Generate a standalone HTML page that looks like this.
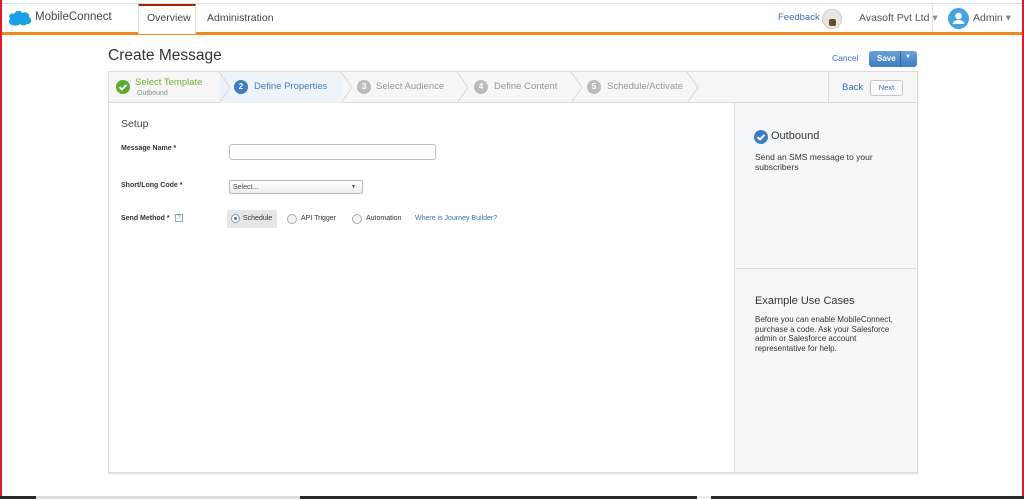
<!DOCTYPE html>
<html><head><style>
*{box-sizing:border-box;margin:0;padding:0}
body{width:1024px;height:499px;overflow:hidden;background:#fff;font-family:"Liberation Sans",Arial,sans-serif;position:relative;color:#333}
.a{position:absolute}
</style></head><body>
<div class="a" style="left:0;top:0;width:2px;height:499px;background:#e0192a"></div>
<div class="a" style="left:1022px;top:0;width:2px;height:499px;background:#e0192a"></div>
<div class="a" style="left:2px;top:3px;width:1020px;height:1px;background:#ddd"></div>
<!-- header -->
<div class="a" style="left:2px;top:32px;width:1020px;height:3px;background:#f08a1c"></div>
<svg class="a" style="left:8px;top:10px" width="24" height="16" viewBox="0 0 24 16"><path d="M5 15C1 15 0 11 2 9C0 6 3 2 6 4C8 0 13 0 14 3C17 1 22 3 21 7C25 9 23 15 19 14C17 16 14 16 12 14C10 16 6 16 5 15Z" fill="#1ba1e2"/></svg>
<div class="a" style="left:35px;top:11px;font-size:11.5px;color:#444">MobileConnect</div>
<div class="a" style="left:138px;top:4px;width:58px;height:30px;background:#fff;border-left:1px solid #ddd;border-right:1px solid #ddd;border-top:2px solid #9a2a0a"></div>
<div class="a" style="left:147px;top:12px;font-size:10.5px;color:#444">Overview</div>
<div class="a" style="left:207px;top:12px;font-size:10.5px;color:#444">Administration</div>
<div class="a" style="left:778px;top:12px;font-size:9.5px;color:#3a6eb5">Feedback</div>
<div class="a" style="left:822px;top:9px;width:20px;height:20px;border-radius:50%;background:#e8e6e2;border:1px solid #ccc"></div>
<div class="a" style="left:829px;top:19px;width:7px;height:7px;border-radius:2px;background:#6b4a2a"></div>
<div class="a" style="left:859px;top:12px;font-size:10.5px;color:#555">Avasoft Pvt Ltd <span style="color:#888">▾</span></div>
<div class="a" style="left:932px;top:4px;width:1px;height:28px;background:#e3e3e3"></div>
<div class="a" style="left:948px;top:8px;width:21px;height:21px;border-radius:50%;background:#45a3e0"></div>
<svg class="a" style="left:948px;top:8px" width="21" height="21" viewBox="0 0 21 21"><circle cx="10.5" cy="8" r="3.3" fill="#fff"/><path d="M4.5 16c1-3 3-4 6-4s5 1 6 4z" fill="#fff"/></svg>
<div class="a" style="left:973px;top:12px;font-size:10.5px;color:#555">Admin <span style="color:#888">▾</span></div>
<!-- title -->
<div class="a" style="left:108px;top:47px;font-size:15.5px;color:#333">Create Message</div>
<div class="a" style="left:832px;top:53px;font-size:8.5px;color:#3a6eb5">Cancel</div>
<div class="a" style="left:869px;top:51px;width:48px;height:16px;border-radius:3px;background:linear-gradient(#6aa0d8,#3f7cc0)"></div>
<div class="a" style="left:900px;top:51px;width:1px;height:16px;background:#2f65a3"></div>
<div class="a" style="left:877px;top:54px;font-size:8px;color:#fff;font-weight:bold">Save</div>
<div class="a" style="left:905px;top:54px;font-size:6px;color:#fff">▼</div>
<!-- panel -->
<div class="a" style="left:108px;top:71px;width:810px;height:402px;border:1px solid #dcdcdc;box-shadow:0 1px 1px #ddd"></div>
<div class="a" style="left:109px;top:72px;width:808px;height:31px;background:#f6f6f6;border-bottom:1px solid #ddd"></div>
<div class="a" style="left:220px;top:72px;width:122px;height:31px;background:#eef3fa"></div>
<svg class="a" style="left:109px;top:72px" width="720" height="31" viewBox="0 0 720 31" fill="none" stroke="#d8d8d8"><path d="M110 0L121 15.5L110 31M232 0L243 15.5L232 31M348 0L359 15.5L348 31M462 0L473 15.5L462 31M578 0L589 15.5L578 31"/></svg>
<svg class="a" style="left:116px;top:80px" width="14" height="14"><circle cx="7" cy="7" r="7" fill="#5aab33"/><path d="M3.5 7.2L6 9.5L10.5 4.8" stroke="#fff" stroke-width="1.8" fill="none"/></svg>
<div class="a" style="left:135px;top:77px;font-size:9.5px;color:#6bb33a">Select Template</div>
<div class="a" style="left:137px;top:90px;font-size:7px;color:#888">Outbound</div>
<div class="a" style="left:234px;top:80px;width:14px;height:14px;border-radius:50%;background:#3f7cc0;color:#fff;font-size:8px;font-weight:bold;text-align:center;line-height:14px">2</div>
<div class="a" style="left:254px;top:81px;font-size:9.5px;color:#4a7cb8">Define Properties</div>
<div class="a" style="left:357px;top:80px;width:14px;height:14px;border-radius:50%;background:#bbb;color:#fff;font-size:8px;font-weight:bold;text-align:center;line-height:14px">3</div>
<div class="a" style="left:376px;top:81px;font-size:9.5px;color:#999">Select Audience</div>
<div class="a" style="left:474px;top:80px;width:14px;height:14px;border-radius:50%;background:#bbb;color:#fff;font-size:8px;font-weight:bold;text-align:center;line-height:14px">4</div>
<div class="a" style="left:494px;top:81px;font-size:9.5px;color:#999">Define Content</div>
<div class="a" style="left:587px;top:80px;width:14px;height:14px;border-radius:50%;background:#bbb;color:#fff;font-size:8px;font-weight:bold;text-align:center;line-height:14px">5</div>
<div class="a" style="left:607px;top:81px;font-size:9.5px;color:#999">Schedule/Activate</div>
<div class="a" style="left:828px;top:72px;width:1px;height:31px;background:#ddd"></div>
<div class="a" style="left:842px;top:82px;font-size:9.5px;color:#3a6eb5">Back</div>
<div class="a" style="left:870px;top:80px;width:33px;height:16px;border:1px solid #bcc8d6;border-radius:3px;background:#fbfbfb;font-size:7.5px;color:#3a6eb5;text-align:center;line-height:14px">Next</div>
<!-- sidebar -->
<div class="a" style="left:734px;top:103px;width:183px;height:369px;background:#f6f7f9;border-left:1px solid #ddd"></div>
<div class="a" style="left:734px;top:268px;width:183px;height:1px;background:#e0e0e0"></div>
<svg class="a" style="left:754px;top:130px" width="14" height="14"><circle cx="7" cy="7" r="7" fill="#3f7cc0"/><path d="M3.5 7.2L6 9.5L10.5 4.8" stroke="#fff" stroke-width="1.8" fill="none"/></svg>
<div class="a" style="left:771px;top:130px;font-size:11px;color:#333">Outbound</div>
<div class="a" style="left:755px;top:152px;font-size:8.5px;line-height:10px;color:#333;width:150px">Send an SMS message to your subscribers</div>
<div class="a" style="left:755px;top:295px;font-size:11px;color:#333">Example Use Cases</div>
<div class="a" style="left:755px;top:315px;font-size:8px;line-height:9.5px;color:#333;width:142px">Before you can enable MobileConnect, purchase a code. Ask your Salesforce admin or Salesforce account representative for help.</div>
<!-- form -->
<div class="a" style="left:121px;top:118px;font-size:10.5px;color:#444">Setup</div>
<div class="a" style="left:121px;top:145px;font-size:7px;font-weight:bold;color:#333">Message Name *</div>
<div class="a" style="left:229px;top:144px;width:207px;height:16px;border:1px solid #bbb;border-radius:3px"></div>
<div class="a" style="left:121px;top:182px;font-size:7px;font-weight:bold;color:#333">Short/Long Code *</div>
<div class="a" style="left:229px;top:180px;width:134px;height:14px;border:1px solid #bbb;border-radius:2px;background:linear-gradient(#fff,#eee);font-size:7px;padding:3px 3px;color:#444">Select...<span style="position:absolute;right:6px;top:3px;font-size:5px">▼</span></div>
<div class="a" style="left:121px;top:215px;font-size:7px;font-weight:bold;color:#333">Send Method *</div>
<div class="a" style="left:175px;top:214px;width:8px;height:8px;border:1px solid #8ab;font-size:6px;color:#58a;text-align:center;line-height:7px">?</div>
<div class="a" style="left:227px;top:210px;width:50px;height:18px;background:#e6e6e6;border-radius:2px"></div>
<div class="a" style="left:231px;top:214px;width:9px;height:9px;border-radius:50%;border:1px solid #999;background:#fff"></div>
<div class="a" style="left:234px;top:217px;width:3px;height:3px;border-radius:50%;background:#3f7cc0"></div>
<div class="a" style="left:243px;top:215px;font-size:7px;color:#333">Schedule</div>
<div class="a" style="left:287px;top:214px;width:10px;height:10px;border-radius:50%;border:1px solid #aaa;background:#f3f3f3"></div>
<div class="a" style="left:301px;top:215px;font-size:7px;color:#333">API Trigger</div>
<div class="a" style="left:352px;top:214px;width:10px;height:10px;border-radius:50%;border:1px solid #aaa;background:#f3f3f3"></div>
<div class="a" style="left:366px;top:215px;font-size:7px;color:#333">Automation</div>
<div class="a" style="left:415px;top:215px;font-size:7px;color:#3a6eb5">Where is Journey Builder?</div>
<!-- bottom bar -->
<div class="a" style="left:0;top:496px;width:1024px;height:3px;background:#2a2a2a"></div>
<div class="a" style="left:36px;top:496px;width:264px;height:3px;background:#ddd"></div>
<div class="a" style="left:697px;top:496px;width:14px;height:3px;background:#eee"></div>
</body></html>
